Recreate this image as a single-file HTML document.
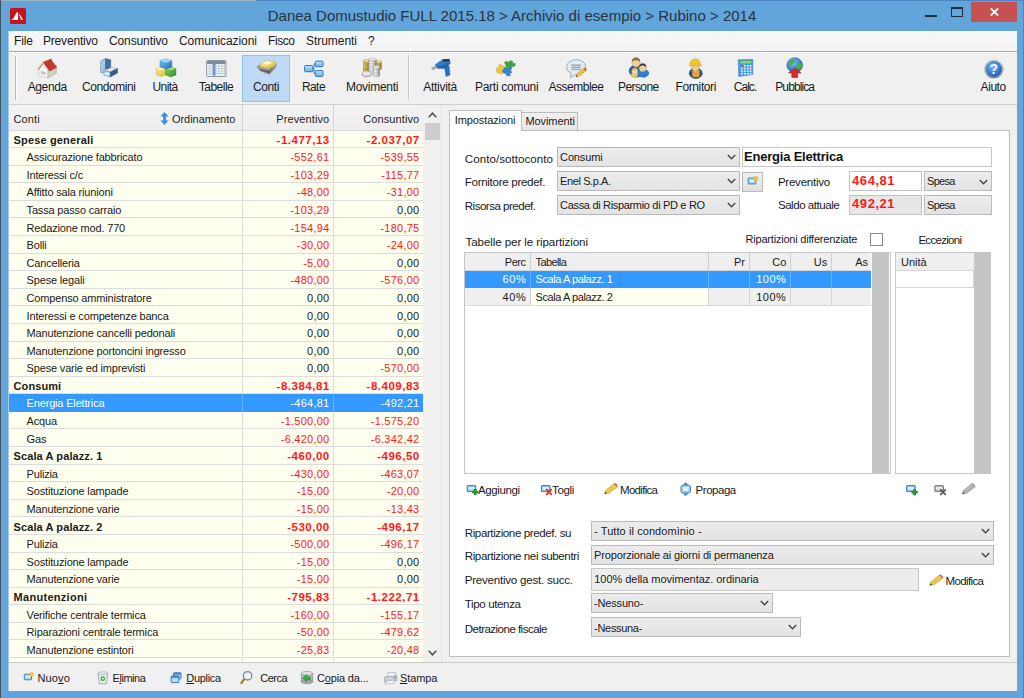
<!DOCTYPE html>
<html><head><meta charset="utf-8"><title>Danea Domustudio</title>
<style>
html,body{margin:0;padding:0}
body{width:1024px;height:698px;overflow:hidden;position:relative;background:#62a5da;font-family:"Liberation Sans",sans-serif;}
.t{position:absolute;white-space:nowrap;}
.r{position:absolute;box-sizing:border-box;}
svg{position:absolute;overflow:visible}
</style></head><body>

<div class="r" style="left:0.00px;top:0.00px;width:1.20px;height:698.00px;background:#44505c;"></div>
<div class="r" style="left:1023.00px;top:0.00px;width:1.00px;height:698.00px;background:#4f84b8;"></div>
<div class="r" style="left:1.00px;top:0.00px;width:255.00px;height:1.00px;background:#9db6cc;"></div>
<div class="r" style="left:256.00px;top:0.00px;width:768.00px;height:1.00px;background:#4a86c6;"></div>
<div class="r" style="left:9.60px;top:8.00px;width:16.00px;height:15.80px;background:#c5141c;border-radius:1.6px;"></div>
<svg style="left:0.00px;top:0.00px" width="32" height="32" viewBox="0 0 32 32"><path d="M11.1 19.9 L13.05 18.8 L17.0 12.0 L18.1 12.2 L18.1 19.9 Z" fill="#fff"/><path d="M19.0 14.3 L19.8 13.9 L23.1 19.9 L21.0 19.9 Z" fill="#fbe3e4"/></svg>
<div class="t" style="top:8.00px;font-size:15px;line-height:16px;color:#26343f;letter-spacing:0.000px;left:512.00px;transform:translateX(-50%);">Danea Domustudio FULL 2015.18 &gt; Archivio di esempio &gt; Rubino &gt; 2014</div>
<div class="r" style="left:925.00px;top:15.00px;width:11.50px;height:2.00px;background:#1f2e3d;"></div>
<div class="r" style="left:951.30px;top:7.30px;width:12.20px;height:9.50px;border:1px solid #1f2e3d;border-top-width:2.6px;"></div>
<div class="r" style="left:971.30px;top:1.50px;width:46.00px;height:20.50px;background:#c75050;"></div>
<svg style="left:989.50px;top:7.50px" width="9" height="8" viewBox="0 0 9 8"><path d="M0.8 0.4 L8.2 7.6 M8.2 0.4 L0.8 7.6" stroke="#fff" stroke-width="1.9" fill="none"/></svg>
<div class="r" style="left:8.00px;top:31.00px;width:1.00px;height:660.00px;background:#a9cbe8;"></div>
<div class="r" style="left:9.00px;top:31.30px;width:1008.00px;height:659.70px;background:#f0f0f0;"></div>
<div class="r" style="left:9.00px;top:31.30px;width:1008.00px;height:19.70px;background:linear-gradient(#f7f7f8,#f3f4f5);"></div>
<div class="r" style="left:9.00px;top:51.00px;width:1008.00px;height:1.00px;background:#a9a9a9;"></div>
<div class="r" style="left:9.00px;top:52.00px;width:1008.00px;height:1.00px;background:#ffffff;"></div>
<div class="t" style="top:33.30px;font-size:12px;line-height:16px;color:#1a1a1a;letter-spacing:-0.115px;left:14.00px;">File</div>
<div class="t" style="top:33.30px;font-size:12px;line-height:16px;color:#1a1a1a;letter-spacing:-0.189px;left:43.00px;">Preventivo</div>
<div class="t" style="top:33.30px;font-size:12px;line-height:16px;color:#1a1a1a;letter-spacing:-0.116px;left:109.00px;">Consuntivo</div>
<div class="t" style="top:33.30px;font-size:12px;line-height:16px;color:#1a1a1a;letter-spacing:-0.059px;left:179.00px;">Comunicazioni</div>
<div class="t" style="top:33.30px;font-size:12px;line-height:16px;color:#1a1a1a;letter-spacing:-0.418px;left:268.00px;">Fisco</div>
<div class="t" style="top:33.30px;font-size:12px;line-height:16px;color:#1a1a1a;letter-spacing:-0.045px;left:306.00px;">Strumenti</div>
<div class="t" style="top:33.30px;font-size:12px;line-height:16px;color:#1a1a1a;letter-spacing:-1.188px;left:368.00px;">?</div>
<div class="r" style="left:9.00px;top:104.00px;width:1008.00px;height:1.00px;background:#cfcfcf;"></div>
<div class="r" style="left:14.50px;top:56.00px;width:1.20px;height:44.00px;background:#b9b9b9;"></div>
<div class="r" style="left:15.70px;top:56.00px;width:1.00px;height:44.00px;background:#fdfdfd;"></div>
<div class="r" style="left:408.00px;top:55.00px;width:1.00px;height:45.00px;background:#c4c4c4;"></div>
<div class="r" style="left:409.00px;top:55.00px;width:1.00px;height:45.00px;background:#fbfbfb;"></div>
<div class="r" style="left:241.80px;top:54.50px;width:48.40px;height:47.60px;background:#bfdaf4;border:1px solid #93c2ef;"></div>
<div class="t" style="top:78.54px;font-size:12px;line-height:16px;color:#1a1a1a;letter-spacing:-0.405px;left:27.75px;">Agenda</div>
<div class="t" style="top:78.54px;font-size:12px;line-height:16px;color:#1a1a1a;letter-spacing:-0.422px;left:82.00px;">Condomini</div>
<div class="t" style="top:78.54px;font-size:12px;line-height:16px;color:#1a1a1a;letter-spacing:-0.604px;left:152.50px;">Unità</div>
<div class="t" style="top:78.54px;font-size:12px;line-height:16px;color:#1a1a1a;letter-spacing:-0.505px;left:198.75px;">Tabelle</div>
<div class="t" style="top:78.54px;font-size:12px;line-height:16px;color:#1a1a1a;letter-spacing:-0.429px;left:253.10px;">Conti</div>
<div class="t" style="top:78.54px;font-size:12px;line-height:16px;color:#1a1a1a;letter-spacing:-0.553px;left:301.90px;">Rate</div>
<div class="t" style="top:78.54px;font-size:12px;line-height:16px;color:#1a1a1a;letter-spacing:-0.273px;left:346.00px;">Movimenti</div>
<div class="t" style="top:78.54px;font-size:12px;line-height:16px;color:#1a1a1a;letter-spacing:-0.288px;left:423.25px;">Attività</div>
<div class="t" style="top:78.54px;font-size:12px;line-height:16px;color:#1a1a1a;letter-spacing:-0.282px;left:475.00px;">Parti comuni</div>
<div class="t" style="top:78.54px;font-size:12px;line-height:16px;color:#1a1a1a;letter-spacing:-0.472px;left:548.40px;">Assemblee</div>
<div class="t" style="top:78.54px;font-size:12px;line-height:16px;color:#1a1a1a;letter-spacing:-0.576px;left:618.00px;">Persone</div>
<div class="t" style="top:78.54px;font-size:12px;line-height:16px;color:#1a1a1a;letter-spacing:-0.389px;left:675.50px;">Fornitori</div>
<div class="t" style="top:78.54px;font-size:12px;line-height:16px;color:#1a1a1a;letter-spacing:-0.961px;left:733.75px;">Calc.</div>
<div class="t" style="top:78.54px;font-size:12px;line-height:16px;color:#1a1a1a;letter-spacing:-0.897px;left:775.25px;">Pubblica</div>
<div class="t" style="top:78.54px;font-size:12px;line-height:16px;color:#1a1a1a;letter-spacing:-0.440px;left:980.60px;">Aiuto</div>
<svg style="left:0;top:0;pointer-events:none" width="1024" height="698" viewBox="0 0 1024 698"><defs>
<linearGradient id="gb" x1="0" y1="0" x2="0" y2="1"><stop offset="0" stop-color="#bfe4fa"/><stop offset="1" stop-color="#5fb0e6"/></linearGradient>
<linearGradient id="gy" x1="0" y1="0" x2="1" y2="1"><stop offset="0" stop-color="#fbf1a0"/><stop offset="1" stop-color="#d9b92e"/></linearGradient>
<linearGradient id="gg" x1="0" y1="0" x2="1" y2="1"><stop offset="0" stop-color="#7fd35a"/><stop offset="1" stop-color="#2e8f24"/></linearGradient>
<linearGradient id="gbl" x1="0" y1="0" x2="1" y2="1"><stop offset="0" stop-color="#7cc3f2"/><stop offset="1" stop-color="#1f6fc0"/></linearGradient>
<radialGradient id="gh" cx="0.4" cy="0.35" r="0.7"><stop offset="0" stop-color="#7cc0f5"/><stop offset="1" stop-color="#1c62b5"/></radialGradient>
<radialGradient id="gl" cx="0.4" cy="0.35" r="0.7"><stop offset="0" stop-color="#6fc0ff"/><stop offset="1" stop-color="#1a58b0"/></radialGradient>
<linearGradient id="gdr" x1="0" y1="0" x2="0.6" y2="1"><stop offset="0" stop-color="#4f9fe6"/><stop offset="1" stop-color="#145aa8"/></linearGradient>
<linearGradient id="gs" x1="0" y1="0" x2="1" y2="0"><stop offset="0" stop-color="#cfcfcf"/><stop offset="0.4" stop-color="#f4f4f4"/><stop offset="1" stop-color="#8a8a8a"/></linearGradient>
<linearGradient id="go" x1="0" y1="0" x2="1" y2="0"><stop offset="0" stop-color="#e8d47a"/><stop offset="0.5" stop-color="#c9ab3c"/><stop offset="1" stop-color="#9c7f22"/></linearGradient>
</defs>
<polygon points="47.75,70.75 56.25,67.25 56.25,73.25 47.75,78.00" fill="#d8cfbf" stroke="#9b9384" stroke-width="0.5" stroke-linejoin="round" />
<polygon points="38.75,69.50 43.12,63.50 47.75,70.75 47.75,78.00 38.75,75.50" fill="#f7f7f5" stroke="#a8a8a4" stroke-width="0.5" stroke-linejoin="round" />
<polygon points="40.88,71.00 45.50,72.00 45.50,75.12 40.88,74.12" fill="#b9c4cf" stroke="none" stroke-width="0.6" stroke-linejoin="round" />
<polygon points="49.00,59.25 51.75,58.50 51.75,61.38 49.00,62.00" fill="#b59a6c" stroke="none" stroke-width="0.6" stroke-linejoin="round" />
<polygon points="43.12,62.00 50.75,59.50 56.75,67.25 49.62,71.00" fill="#c6382c" stroke="#9a2a22" stroke-width="0.5" stroke-linejoin="round" />
<polygon points="37.50,69.25 43.12,61.75 44.00,62.75 38.75,70.25" fill="#b9a57c" stroke="none" stroke-width="0.6" stroke-linejoin="round" />
<polygon points="100.50,61.00 105.50,58.50 105.50,73.00 100.50,72.62" fill="#8fb6dc" stroke="#5c7fa6" stroke-width="0.4" stroke-linejoin="round" />
<polygon points="105.50,58.50 110.75,59.75 110.75,70.75 105.50,73.00" fill="#3f6f9f" stroke="#35597f" stroke-width="0.4" stroke-linejoin="round" />
<polygon points="101.00,62.00 105.00,60.75 105.00,61.50 101.00,62.75" fill="#d6e8f7" stroke="none" stroke-width="0.6" stroke-linejoin="round" />
<polygon points="101.00,64.25 105.00,63.00 105.00,63.75 101.00,65.00" fill="#d6e8f7" stroke="none" stroke-width="0.6" stroke-linejoin="round" />
<polygon points="101.00,66.50 105.00,65.25 105.00,66.00 101.00,67.25" fill="#d6e8f7" stroke="none" stroke-width="0.6" stroke-linejoin="round" />
<polygon points="101.00,68.75 105.00,67.50 105.00,68.25 101.00,69.50" fill="#d6e8f7" stroke="none" stroke-width="0.6" stroke-linejoin="round" />
<polygon points="101.00,70.75 105.00,69.50 105.00,70.25 101.00,71.50" fill="#d6e8f7" stroke="none" stroke-width="0.6" stroke-linejoin="round" />
<polygon points="103.75,70.75 111.50,67.50 117.50,68.50 110.25,72.00" fill="#dfe7ee" stroke="#8fa0b2" stroke-width="0.4" stroke-linejoin="round" />
<polygon points="103.75,70.75 110.25,72.00 110.25,77.00 103.75,75.25" fill="#a9cdec" stroke="#5c83ab" stroke-width="0.4" stroke-linejoin="round" />
<polygon points="110.25,72.00 117.50,68.50 117.50,73.00 110.25,77.00" fill="#2f5f8c" stroke="#274a6d" stroke-width="0.4" stroke-linejoin="round" />
<polygon points="105.00,72.25 109.25,73.12 109.25,75.50 105.00,74.50" fill="#e4f1fb" stroke="none" stroke-width="0.6" stroke-linejoin="round" />
<polygon points="156.25,68.50 161.00,67.00 166.25,68.50 166.25,74.50 161.25,76.50 156.25,74.50" fill="url(#gy)" stroke="#b89a20" stroke-width="0.4" stroke-linejoin="round" />
<polygon points="156.25,68.50 161.00,67.00 166.25,68.50 161.25,70.25" fill="#fdf6b8" stroke="none" stroke-width="0.6" stroke-linejoin="round" />
<polygon points="165.62,68.50 171.00,67.00 176.00,68.50 176.00,75.00 170.75,77.00 165.62,75.00" fill="url(#gg)" stroke="#2c7a22" stroke-width="0.4" stroke-linejoin="round" />
<polygon points="165.62,68.50 171.00,67.00 176.00,68.50 170.75,70.25" fill="#9be27c" stroke="none" stroke-width="0.6" stroke-linejoin="round" />
<polygon points="160.00,60.75 166.00,59.00 171.88,60.75 171.88,67.00 166.00,69.00 160.00,67.00" fill="url(#gbl)" stroke="#1d5fa8" stroke-width="0.4" stroke-linejoin="round" />
<polygon points="160.00,60.75 166.00,59.00 171.88,60.75 166.00,62.75" fill="#a5d8fa" stroke="none" stroke-width="0.6" stroke-linejoin="round" />
<rect x="206.62" y="60.50" width="19.38" height="16.00" rx="1" fill="#f4f6f8" stroke="#8c98a4" stroke-width="1" />
<rect x="207.12" y="61.00" width="18.38" height="3.00" rx="0" fill="#7f8d9b" stroke="none" stroke-width="1" />
<rect x="212.50" y="64.00" width="3.00" height="11.50" rx="0" fill="#3f86d6" stroke="none" stroke-width="1" />
<rect x="209.50" y="64.00" width="0.70" height="11.50" rx="0" fill="#b5c0cb" stroke="none" stroke-width="1" />
<rect x="212.50" y="64.00" width="0.70" height="11.50" rx="0" fill="#b5c0cb" stroke="none" stroke-width="1" />
<rect x="215.50" y="64.00" width="0.70" height="11.50" rx="0" fill="#b5c0cb" stroke="none" stroke-width="1" />
<rect x="218.50" y="64.00" width="0.70" height="11.50" rx="0" fill="#b5c0cb" stroke="none" stroke-width="1" />
<rect x="221.50" y="64.00" width="0.70" height="11.50" rx="0" fill="#b5c0cb" stroke="none" stroke-width="1" />
<rect x="224.00" y="64.00" width="0.70" height="11.50" rx="0" fill="#b5c0cb" stroke="none" stroke-width="1" />
<rect x="207.62" y="65.75" width="17.38" height="0.70" rx="0" fill="#b5c0cb" stroke="none" stroke-width="1" />
<rect x="207.62" y="68.25" width="17.38" height="0.70" rx="0" fill="#b5c0cb" stroke="none" stroke-width="1" />
<rect x="207.62" y="70.75" width="17.38" height="0.70" rx="0" fill="#b5c0cb" stroke="none" stroke-width="1" />
<rect x="207.62" y="73.25" width="17.38" height="0.70" rx="0" fill="#b5c0cb" stroke="none" stroke-width="1" />
<polygon points="256.88,67.00 261.25,63.88 276.50,63.88 275.00,68.25 269.38,74.25 260.00,70.75" fill="#9a9a9a" stroke="#6e6e6e" stroke-width="0.4" stroke-linejoin="round" />
<polygon points="258.75,68.88 269.38,70.75 273.75,67.00 269.38,73.50 260.62,70.50" fill="#5e5e5e" stroke="none" stroke-width="0.6" stroke-linejoin="round" />
<polygon points="260.62,63.50 266.88,60.50 275.62,62.00 275.00,66.00 268.12,68.50 260.00,66.75" fill="url(#gy)" stroke="#c5a82e" stroke-width="0.4" stroke-linejoin="round" />
<polygon points="261.88,63.50 266.88,61.25 272.75,62.25 267.75,64.75" fill="#fffbd0" stroke="none" stroke-width="0.6" stroke-linejoin="round" />
<path d="M313.12 68.50 L314.00 68.50 M314.00 63.88 L314.00 73.50 M314.00 63.88 L315.00 63.88 M314.00 73.50 L315.00 73.50" stroke="#2f78b8" stroke-width="0.9" fill="none"/>
<rect x="304.50" y="65.50" width="8.25" height="6.25" rx="1" fill="url(#gb)" stroke="#2f78b8" stroke-width="1" />
<rect x="315.25" y="61.12" width="7.75" height="5.62" rx="1" fill="url(#gb)" stroke="#2f78b8" stroke-width="1" />
<rect x="315.25" y="70.50" width="7.75" height="5.88" rx="1" fill="url(#gb)" stroke="#2f78b8" stroke-width="1" />
<rect x="363.25" y="61.00" width="6.25" height="9.50" rx="0" fill="url(#go)" stroke="#8c7420" stroke-width="0.4" /><ellipse cx="366.38" cy="70.50" rx="3.12" ry="1.30" fill="url(#go)" stroke="#8c7420" stroke-width="0.4" /><rect x="363.25" y="62.75" width="6.25" height="0.50" rx="0" fill="#6a6a4a" stroke="none" stroke-width="0" opacity="0.45"/><rect x="363.25" y="64.50" width="6.25" height="0.50" rx="0" fill="#6a6a4a" stroke="none" stroke-width="0" opacity="0.45"/><rect x="363.25" y="66.25" width="6.25" height="0.50" rx="0" fill="#6a6a4a" stroke="none" stroke-width="0" opacity="0.45"/><rect x="363.25" y="68.00" width="6.25" height="0.50" rx="0" fill="#6a6a4a" stroke="none" stroke-width="0" opacity="0.45"/><ellipse cx="366.38" cy="61.00" rx="3.12" ry="1.30" fill="#efe3a0" stroke="#8c7420" stroke-width="0.4" />
<rect x="376.00" y="62.00" width="5.50" height="6.50" rx="0" fill="url(#go)" stroke="#8c7420" stroke-width="0.4" /><ellipse cx="378.75" cy="68.50" rx="2.75" ry="1.30" fill="url(#go)" stroke="#8c7420" stroke-width="0.4" /><rect x="376.00" y="63.75" width="5.50" height="0.50" rx="0" fill="#6a6a4a" stroke="none" stroke-width="0" opacity="0.45"/><rect x="376.00" y="65.50" width="5.50" height="0.50" rx="0" fill="#6a6a4a" stroke="none" stroke-width="0" opacity="0.45"/><ellipse cx="378.75" cy="62.00" rx="2.75" ry="1.30" fill="#efe3a0" stroke="#8c7420" stroke-width="0.4" />
<rect x="368.75" y="59.50" width="7.50" height="13.75" rx="0" fill="url(#gs)" stroke="#8e8e8e" stroke-width="0.4" /><ellipse cx="372.50" cy="73.25" rx="3.75" ry="1.30" fill="url(#gs)" stroke="#8e8e8e" stroke-width="0.4" /><rect x="368.75" y="61.25" width="7.50" height="0.50" rx="0" fill="#777" stroke="none" stroke-width="0" opacity="0.45"/><rect x="368.75" y="63.00" width="7.50" height="0.50" rx="0" fill="#777" stroke="none" stroke-width="0" opacity="0.45"/><rect x="368.75" y="64.75" width="7.50" height="0.50" rx="0" fill="#777" stroke="none" stroke-width="0" opacity="0.45"/><rect x="368.75" y="66.50" width="7.50" height="0.50" rx="0" fill="#777" stroke="none" stroke-width="0" opacity="0.45"/><rect x="368.75" y="68.25" width="7.50" height="0.50" rx="0" fill="#777" stroke="none" stroke-width="0" opacity="0.45"/><rect x="368.75" y="70.00" width="7.50" height="0.50" rx="0" fill="#777" stroke="none" stroke-width="0" opacity="0.45"/><ellipse cx="372.50" cy="59.50" rx="3.75" ry="1.30" fill="#ececec" stroke="#8e8e8e" stroke-width="0.4" />
<rect x="373.00" y="67.00" width="6.75" height="8.50" rx="0" fill="url(#gs)" stroke="#8e8e8e" stroke-width="0.4" /><ellipse cx="376.38" cy="75.50" rx="3.38" ry="1.30" fill="url(#gs)" stroke="#8e8e8e" stroke-width="0.4" /><rect x="373.00" y="68.75" width="6.75" height="0.50" rx="0" fill="#777" stroke="none" stroke-width="0" opacity="0.45"/><rect x="373.00" y="70.50" width="6.75" height="0.50" rx="0" fill="#777" stroke="none" stroke-width="0" opacity="0.45"/><rect x="373.00" y="72.25" width="6.75" height="0.50" rx="0" fill="#777" stroke="none" stroke-width="0" opacity="0.45"/><ellipse cx="376.38" cy="67.00" rx="3.38" ry="1.30" fill="#ececec" stroke="#8e8e8e" stroke-width="0.4" />
<ellipse cx="366.62" cy="74.25" rx="4.60" ry="2.60" fill="#c9c9c9" stroke="#8e8e8e" stroke-width="0.5" />
<ellipse cx="366.62" cy="73.50" rx="4.60" ry="2.60" fill="#e6e6e6" stroke="#8a8a8a" stroke-width="0.5" />
<polygon points="431.25,68.50 436.00,65.50 437.50,67.50 432.88,69.75" fill="#a8aeb4" stroke="#70767c" stroke-width="0.4" stroke-linejoin="round" />
<polygon points="435.38,64.50 442.25,59.75 449.12,59.50 450.38,63.00 446.00,68.25 437.88,68.50" fill="url(#gdr)" stroke="#174f90" stroke-width="0.4" stroke-linejoin="round" />
<polygon points="442.25,59.50 449.12,59.00 450.00,61.00 443.50,61.75" fill="#1d2f45" stroke="none" stroke-width="0.6" stroke-linejoin="round" />
<polygon points="444.50,67.00 449.12,66.00 450.00,75.12 446.00,76.50" fill="#1f72c8" stroke="#174f90" stroke-width="0.4" stroke-linejoin="round" />
<polygon points="496.75,68.00 499.62,66.75 499.00,65.00 501.25,64.50 502.12,66.50 504.62,65.75 504.25,69.50 502.50,70.75 503.75,72.00 500.88,74.50 499.62,72.62 497.50,73.50 496.50,70.75" fill="#e7c73a" stroke="#b8981c" stroke-width="0.4" stroke-linejoin="round" />
<polygon points="504.25,62.50 507.12,61.00 508.00,62.50 510.50,60.50 513.00,61.75 512.12,63.50 515.25,63.50 515.00,66.00 512.12,66.75 511.25,68.25 508.38,66.75 506.50,68.00 505.88,65.12" fill="#3fa53a" stroke="#247a22" stroke-width="0.4" stroke-linejoin="round" />
<polygon points="502.50,70.75 505.00,67.25 507.12,68.25 509.25,67.00 511.50,68.50 510.50,70.75 512.12,72.25 509.62,73.50 510.50,75.50 507.12,76.00 505.88,73.50 503.75,73.25" fill="#2f86d8" stroke="#1a5ea6" stroke-width="0.4" stroke-linejoin="round" />
<path d="M566.75 67.62 C566.75 62.00 571.50 59.75 576.25 59.75 C582.12 59.75 585.88 63.25 585.88 67.62 C585.88 72.00 581.50 74.75 575.88 74.50 L570.25 77.62 L571.25 73.50 C568.38 72.00 566.75 70.12 566.75 67.62 Z" fill="#e3ebf2" stroke="#8ea3b6" stroke-width="0.9"/>
<rect x="571.25" y="64.50" width="9.50" height="1.10" rx="0" fill="#8b99a6" stroke="none" stroke-width="1" />
<rect x="571.25" y="66.62" width="9.50" height="1.10" rx="0" fill="#8b99a6" stroke="none" stroke-width="1" />
<rect x="571.25" y="68.75" width="9.50" height="1.10" rx="0" fill="#8b99a6" stroke="none" stroke-width="1" />
<polygon points="575.88,77.00 577.12,73.50 584.00,68.00 586.25,70.50 579.25,76.00" fill="#e8c53a" stroke="#a88b1c" stroke-width="0.4" stroke-linejoin="round" />
<polygon points="583.38,68.50 584.62,67.50 586.75,69.75 585.75,71.00" fill="#d8483c" stroke="none" stroke-width="0.6" stroke-linejoin="round" />
<polygon points="575.88,77.00 576.50,75.00 577.75,76.25" fill="#444" stroke="none" stroke-width="0.6" stroke-linejoin="round" />
<ellipse cx="636.38" cy="71.00" rx="7.20" ry="6.20" fill="#2a5f9e" stroke="#1c4577" stroke-width="0.4" />
<ellipse cx="636.00" cy="62.25" rx="4.10" ry="5.00" fill="#f0cf9a" stroke="#b08a50" stroke-width="0.4" />
<path d="M631.75 62.00 C631.75 56.38 640.50 56.38 640.25 62.00 C638.25 59.75 633.88 59.75 631.75 62.00Z" fill="#8a6a3a"/>
<ellipse cx="643.25" cy="73.25" rx="5.60" ry="4.00" fill="#2f7fd0" stroke="#1c4f90" stroke-width="0.4" />
<ellipse cx="642.62" cy="67.62" rx="3.60" ry="4.20" fill="#f0cf9a" stroke="#b08a50" stroke-width="0.4" />
<path d="M639.00 67.25 C639.00 62.25 646.75 62.25 646.50 67.50 C644.50 65.00 641.00 65.00 639.00 67.25Z" fill="#2c3440"/>
<ellipse cx="634.50" cy="74.75" rx="3.40" ry="2.60" fill="#e8d070" stroke="#a89030" stroke-width="0.4" />
<ellipse cx="634.75" cy="71.38" rx="3.00" ry="3.30" fill="#f3d9a8" stroke="#b08a50" stroke-width="0.4" />
<path d="M631.75 71.00 C632.00 67.25 637.62 67.25 637.75 71.00 C636.00 69.25 633.50 69.25 631.75 71.00Z" fill="#d8b45a"/>
<ellipse cx="695.75" cy="73.25" rx="6.60" ry="5.20" fill="#27528a" stroke="#1a3a66" stroke-width="0.4" />
<polygon points="692.00,70.75 694.75,69.50 696.75,69.50 699.75,70.75 699.25,77.00 692.62,77.00" fill="#e0a832" stroke="none" stroke-width="0.6" stroke-linejoin="round" />
<polygon points="693.88,69.50 695.75,72.00 697.62,69.50" fill="#eef2f6" stroke="none" stroke-width="0.6" stroke-linejoin="round" />
<ellipse cx="695.50" cy="66.75" rx="3.90" ry="4.30" fill="#eec890" stroke="#a8804a" stroke-width="0.4" />
<path d="M689.75 65.00 C689.75 57.00 700.75 57.00 700.50 64.50 L702.00 65.25 L689.25 65.75Z" fill="#f0c828" stroke="#b08c10" stroke-width="0.4"/>
<polygon points="738.25,59.75 752.75,59.50 752.75,74.50 738.75,76.50" fill="#4c9ce8" stroke="#2c6ab8" stroke-width="0.5" stroke-linejoin="round" />
<polygon points="740.25,61.00 751.25,60.75 751.25,63.50 740.25,63.75" fill="#8fdc6a" stroke="#3f8f3a" stroke-width="0.3" stroke-linejoin="round" />
<rect x="741.00" y="65.00" width="1.70" height="1.60" rx="0" fill="#e04040" stroke="none" stroke-width="1" />
<rect x="744.00" y="65.00" width="1.70" height="1.60" rx="0" fill="#e8f2fc" stroke="none" stroke-width="1" />
<rect x="747.00" y="65.00" width="1.70" height="1.60" rx="0" fill="#e8f2fc" stroke="none" stroke-width="1" />
<rect x="749.75" y="65.00" width="1.70" height="1.60" rx="0" fill="#e8f2fc" stroke="none" stroke-width="1" />
<rect x="741.00" y="67.75" width="1.70" height="1.60" rx="0" fill="#e8f2fc" stroke="none" stroke-width="1" />
<rect x="744.00" y="67.75" width="1.70" height="1.60" rx="0" fill="#e8f2fc" stroke="none" stroke-width="1" />
<rect x="747.00" y="67.75" width="1.70" height="1.60" rx="0" fill="#e8f2fc" stroke="none" stroke-width="1" />
<rect x="749.75" y="67.75" width="1.70" height="1.60" rx="0" fill="#e8f2fc" stroke="none" stroke-width="1" />
<rect x="741.00" y="70.50" width="1.70" height="1.60" rx="0" fill="#e8f2fc" stroke="none" stroke-width="1" />
<rect x="744.00" y="70.50" width="1.70" height="1.60" rx="0" fill="#e8f2fc" stroke="none" stroke-width="1" />
<rect x="747.00" y="70.50" width="1.70" height="1.60" rx="0" fill="#e8f2fc" stroke="none" stroke-width="1" />
<rect x="749.75" y="70.50" width="1.70" height="1.60" rx="0" fill="#e8f2fc" stroke="none" stroke-width="1" />
<rect x="741.00" y="73.00" width="1.70" height="1.60" rx="0" fill="#e8f2fc" stroke="none" stroke-width="1" />
<rect x="744.00" y="73.00" width="1.70" height="1.60" rx="0" fill="#e8f2fc" stroke="none" stroke-width="1" />
<rect x="747.00" y="73.00" width="1.70" height="1.60" rx="0" fill="#e8f2fc" stroke="none" stroke-width="1" />
<rect x="749.75" y="73.00" width="1.70" height="1.60" rx="0" fill="#e8f2fc" stroke="none" stroke-width="1" />
<ellipse cx="794.75" cy="65.12" rx="7.90" ry="7.40" fill="url(#gh)" stroke="#1a4f8c" stroke-width="0.5" />
<polygon points="788.50,63.00 791.88,59.75 795.00,60.75 793.75,63.50 791.25,64.50 790.00,67.00" fill="#4cae3c" stroke="none" stroke-width="0.6" stroke-linejoin="round" />
<polygon points="796.50,64.50 800.00,62.00 802.25,64.50 801.25,68.50 798.12,69.50" fill="#4cae3c" stroke="none" stroke-width="0.6" stroke-linejoin="round" />
<polygon points="792.50,67.00 795.00,66.00 795.62,68.88" fill="#4cae3c" stroke="none" stroke-width="0.6" stroke-linejoin="round" />
<polygon points="794.75,68.00 801.25,73.00 797.75,73.00 797.75,77.50 791.75,77.50 791.75,73.00 788.50,73.00" fill="#d82830" stroke="#9a1820" stroke-width="0.5" stroke-linejoin="round" />
<defs><linearGradient id="gring" x1="0" y1="0" x2="0" y2="1"><stop offset="0" stop-color="#d4d8dc"/><stop offset="1" stop-color="#7c8690"/></linearGradient></defs>
<ellipse cx="993.90" cy="68.85" rx="9.70" ry="9.70" fill="url(#gring)" stroke="none" stroke-width="1" />
<ellipse cx="993.90" cy="68.85" rx="7.60" ry="7.60" fill="url(#gl)" stroke="#1d5fae" stroke-width="0.4" />
<text x="993.9" y="73.85" text-anchor="middle" font-family="Liberation Sans" font-weight="700" font-size="14" fill="#f4f8fc">?</text></svg>
<div class="r" style="left:9.00px;top:105.00px;width:414.00px;height:25.50px;background:linear-gradient(#f3f3f3,#eeeeee);"></div>
<div class="r" style="left:242.00px;top:105.00px;width:1.00px;height:25.50px;background:#d5d5d5;"></div>
<div class="r" style="left:333.00px;top:105.00px;width:1.00px;height:25.50px;background:#d5d5d5;"></div>
<div class="t" style="top:110.89px;font-size:11px;line-height:16px;color:#1e1e1e;letter-spacing:0.100px;left:13.50px;">Conti</div>
<div class="t" style="top:110.89px;font-size:11px;line-height:16px;color:#1e1e1e;letter-spacing:-0.019px;left:171.90px;">Ordinamento</div>
<div class="t" style="top:110.89px;font-size:11px;line-height:16px;color:#1e1e1e;letter-spacing:0.100px;right:694.70px;">Preventivo</div>
<div class="t" style="top:110.89px;font-size:11px;line-height:16px;color:#1e1e1e;letter-spacing:0.100px;right:604.70px;">Consuntivo</div>
<svg style="left:159.60px;top:112.40px" width="9" height="13" viewBox="0 0 9 13"><path d="M4.5 0 L8.6 4.6 L5.9 4.6 L5.9 8.4 L8.6 8.4 L4.5 13 L0.4 8.4 L3.1 8.4 L3.1 4.6 L0.4 4.6 Z" fill="#3b8ee0"/></svg>
<div class="r" style="left:9.00px;top:130.50px;width:414.00px;height:531.80px;background:#fffff0;"></div>
<div class="r" style="left:9.00px;top:130.00px;width:414.00px;height:1.00px;background:#d9d9d9;"></div>
<div class="t" style="top:131.69px;font-size:11px;line-height:16px;color:#1a1a1a;letter-spacing:0.150px;font-weight:700;left:13.60px;">Spese generali</div>
<div class="t" style="top:131.69px;font-size:11.5px;line-height:16px;color:#ff1818;letter-spacing:0.500px;font-weight:700;right:694.30px;">-1.477,13</div>
<div class="t" style="top:131.69px;font-size:11.5px;line-height:16px;color:#ff1818;letter-spacing:0.500px;font-weight:700;right:604.30px;">-2.037,07</div>
<div class="r" style="left:9.00px;top:147.09px;width:414.00px;height:1.00px;background:#dcdcdc;"></div>
<div class="t" style="top:149.28px;font-size:11px;line-height:16px;color:#1a1a1a;letter-spacing:-0.170px;left:26.60px;">Assicurazione fabbricato</div>
<div class="t" style="top:149.28px;font-size:11px;line-height:16px;color:#ff1818;letter-spacing:0.250px;right:694.55px;">-552,61</div>
<div class="t" style="top:149.28px;font-size:11px;line-height:16px;color:#ff1818;letter-spacing:0.250px;right:604.55px;">-539,55</div>
<div class="r" style="left:9.00px;top:164.67px;width:414.00px;height:1.00px;background:#dcdcdc;"></div>
<div class="t" style="top:166.87px;font-size:11px;line-height:16px;color:#1a1a1a;letter-spacing:-0.170px;left:26.60px;">Interessi c/c</div>
<div class="t" style="top:166.87px;font-size:11px;line-height:16px;color:#ff1818;letter-spacing:0.250px;right:694.55px;">-103,29</div>
<div class="t" style="top:166.87px;font-size:11px;line-height:16px;color:#ff1818;letter-spacing:0.250px;right:604.55px;">-115,77</div>
<div class="r" style="left:9.00px;top:182.26px;width:414.00px;height:1.00px;background:#dcdcdc;"></div>
<div class="t" style="top:184.45px;font-size:11px;line-height:16px;color:#1a1a1a;letter-spacing:-0.170px;left:26.60px;">Affitto sala riunioni</div>
<div class="t" style="top:184.45px;font-size:11px;line-height:16px;color:#ff1818;letter-spacing:0.250px;right:694.55px;">-48,00</div>
<div class="t" style="top:184.45px;font-size:11px;line-height:16px;color:#ff1818;letter-spacing:0.250px;right:604.55px;">-31,00</div>
<div class="r" style="left:9.00px;top:199.84px;width:414.00px;height:1.00px;background:#dcdcdc;"></div>
<div class="t" style="top:202.04px;font-size:11px;line-height:16px;color:#1a1a1a;letter-spacing:-0.170px;left:26.60px;">Tassa passo carraio</div>
<div class="t" style="top:202.04px;font-size:11px;line-height:16px;color:#ff1818;letter-spacing:0.250px;right:694.55px;">-103,29</div>
<div class="t" style="top:202.04px;font-size:11px;line-height:16px;color:#1a1a1a;letter-spacing:0.250px;right:604.55px;">0,00</div>
<div class="r" style="left:9.00px;top:217.43px;width:414.00px;height:1.00px;background:#dcdcdc;"></div>
<div class="t" style="top:219.62px;font-size:11px;line-height:16px;color:#1a1a1a;letter-spacing:-0.170px;left:26.60px;">Redazione mod. 770</div>
<div class="t" style="top:219.62px;font-size:11px;line-height:16px;color:#ff1818;letter-spacing:0.250px;right:694.55px;">-154,94</div>
<div class="t" style="top:219.62px;font-size:11px;line-height:16px;color:#ff1818;letter-spacing:0.250px;right:604.55px;">-180,75</div>
<div class="r" style="left:9.00px;top:235.02px;width:414.00px;height:1.00px;background:#dcdcdc;"></div>
<div class="t" style="top:237.21px;font-size:11px;line-height:16px;color:#1a1a1a;letter-spacing:-0.170px;left:26.60px;">Bolli</div>
<div class="t" style="top:237.21px;font-size:11px;line-height:16px;color:#ff1818;letter-spacing:0.250px;right:694.55px;">-30,00</div>
<div class="t" style="top:237.21px;font-size:11px;line-height:16px;color:#ff1818;letter-spacing:0.250px;right:604.55px;">-24,00</div>
<div class="r" style="left:9.00px;top:252.60px;width:414.00px;height:1.00px;background:#dcdcdc;"></div>
<div class="t" style="top:254.79px;font-size:11px;line-height:16px;color:#1a1a1a;letter-spacing:-0.170px;left:26.60px;">Cancelleria</div>
<div class="t" style="top:254.79px;font-size:11px;line-height:16px;color:#ff1818;letter-spacing:0.250px;right:694.55px;">-5,00</div>
<div class="t" style="top:254.79px;font-size:11px;line-height:16px;color:#1a1a1a;letter-spacing:0.250px;right:604.55px;">0,00</div>
<div class="r" style="left:9.00px;top:270.19px;width:414.00px;height:1.00px;background:#dcdcdc;"></div>
<div class="t" style="top:272.38px;font-size:11px;line-height:16px;color:#1a1a1a;letter-spacing:-0.170px;left:26.60px;">Spese legali</div>
<div class="t" style="top:272.38px;font-size:11px;line-height:16px;color:#ff1818;letter-spacing:0.250px;right:694.55px;">-480,00</div>
<div class="t" style="top:272.38px;font-size:11px;line-height:16px;color:#ff1818;letter-spacing:0.250px;right:604.55px;">-576,00</div>
<div class="r" style="left:9.00px;top:287.77px;width:414.00px;height:1.00px;background:#dcdcdc;"></div>
<div class="t" style="top:289.97px;font-size:11px;line-height:16px;color:#1a1a1a;letter-spacing:-0.170px;left:26.60px;">Compenso amministratore</div>
<div class="t" style="top:289.97px;font-size:11px;line-height:16px;color:#1a1a1a;letter-spacing:0.250px;right:694.55px;">0,00</div>
<div class="t" style="top:289.97px;font-size:11px;line-height:16px;color:#1a1a1a;letter-spacing:0.250px;right:604.55px;">0,00</div>
<div class="r" style="left:9.00px;top:305.36px;width:414.00px;height:1.00px;background:#dcdcdc;"></div>
<div class="t" style="top:307.55px;font-size:11px;line-height:16px;color:#1a1a1a;letter-spacing:-0.170px;left:26.60px;">Interessi e competenze banca</div>
<div class="t" style="top:307.55px;font-size:11px;line-height:16px;color:#1a1a1a;letter-spacing:0.250px;right:694.55px;">0,00</div>
<div class="t" style="top:307.55px;font-size:11px;line-height:16px;color:#1a1a1a;letter-spacing:0.250px;right:604.55px;">0,00</div>
<div class="r" style="left:9.00px;top:322.95px;width:414.00px;height:1.00px;background:#dcdcdc;"></div>
<div class="t" style="top:325.14px;font-size:11px;line-height:16px;color:#1a1a1a;letter-spacing:-0.170px;left:26.60px;">Manutenzione cancelli pedonali</div>
<div class="t" style="top:325.14px;font-size:11px;line-height:16px;color:#1a1a1a;letter-spacing:0.250px;right:694.55px;">0,00</div>
<div class="t" style="top:325.14px;font-size:11px;line-height:16px;color:#1a1a1a;letter-spacing:0.250px;right:604.55px;">0,00</div>
<div class="r" style="left:9.00px;top:340.53px;width:414.00px;height:1.00px;background:#dcdcdc;"></div>
<div class="t" style="top:342.72px;font-size:11px;line-height:16px;color:#1a1a1a;letter-spacing:-0.170px;left:26.60px;">Manutenzione portoncini ingresso</div>
<div class="t" style="top:342.72px;font-size:11px;line-height:16px;color:#1a1a1a;letter-spacing:0.250px;right:694.55px;">0,00</div>
<div class="t" style="top:342.72px;font-size:11px;line-height:16px;color:#1a1a1a;letter-spacing:0.250px;right:604.55px;">0,00</div>
<div class="r" style="left:9.00px;top:358.12px;width:414.00px;height:1.00px;background:#dcdcdc;"></div>
<div class="t" style="top:360.31px;font-size:11px;line-height:16px;color:#1a1a1a;letter-spacing:-0.170px;left:26.60px;">Spese varie ed imprevisti</div>
<div class="t" style="top:360.31px;font-size:11px;line-height:16px;color:#1a1a1a;letter-spacing:0.250px;right:694.55px;">0,00</div>
<div class="t" style="top:360.31px;font-size:11px;line-height:16px;color:#ff1818;letter-spacing:0.250px;right:604.55px;">-570,00</div>
<div class="r" style="left:9.00px;top:375.70px;width:414.00px;height:1.00px;background:#dcdcdc;"></div>
<div class="t" style="top:377.90px;font-size:11px;line-height:16px;color:#1a1a1a;letter-spacing:0.073px;font-weight:700;left:13.60px;">Consumi</div>
<div class="t" style="top:377.90px;font-size:11.5px;line-height:16px;color:#ff1818;letter-spacing:0.500px;font-weight:700;right:694.30px;">-8.384,81</div>
<div class="t" style="top:377.90px;font-size:11.5px;line-height:16px;color:#ff1818;letter-spacing:0.500px;font-weight:700;right:604.30px;">-8.409,83</div>
<div class="r" style="left:9.00px;top:393.29px;width:414.00px;height:1.00px;background:#dcdcdc;"></div>
<div class="r" style="left:9.00px;top:394.29px;width:414.00px;height:17.59px;background:#3399ff;"></div>
<div class="t" style="top:395.48px;font-size:11px;line-height:16px;color:#ffffff;letter-spacing:-0.170px;left:26.60px;">Energia Elettrica</div>
<div class="t" style="top:395.48px;font-size:11px;line-height:16px;color:#ffffff;letter-spacing:0.250px;right:694.55px;">-464,81</div>
<div class="t" style="top:395.48px;font-size:11px;line-height:16px;color:#ffffff;letter-spacing:0.250px;right:604.55px;">-492,21</div>
<div class="t" style="top:413.07px;font-size:11px;line-height:16px;color:#1a1a1a;letter-spacing:-0.170px;left:26.60px;">Acqua</div>
<div class="t" style="top:413.07px;font-size:11px;line-height:16px;color:#ff1818;letter-spacing:0.250px;right:694.55px;">-1.500,00</div>
<div class="t" style="top:413.07px;font-size:11px;line-height:16px;color:#ff1818;letter-spacing:0.250px;right:604.55px;">-1.575,20</div>
<div class="r" style="left:9.00px;top:428.46px;width:414.00px;height:1.00px;background:#dcdcdc;"></div>
<div class="t" style="top:430.65px;font-size:11px;line-height:16px;color:#1a1a1a;letter-spacing:-0.170px;left:26.60px;">Gas</div>
<div class="t" style="top:430.65px;font-size:11px;line-height:16px;color:#ff1818;letter-spacing:0.250px;right:694.55px;">-6.420,00</div>
<div class="t" style="top:430.65px;font-size:11px;line-height:16px;color:#ff1818;letter-spacing:0.250px;right:604.55px;">-6.342,42</div>
<div class="r" style="left:9.00px;top:446.05px;width:414.00px;height:1.00px;background:#dcdcdc;"></div>
<div class="t" style="top:448.24px;font-size:11px;line-height:16px;color:#1a1a1a;letter-spacing:0.098px;font-weight:700;left:13.60px;">Scala A palazz. 1</div>
<div class="t" style="top:448.24px;font-size:11.5px;line-height:16px;color:#ff1818;letter-spacing:0.500px;font-weight:700;right:694.30px;">-460,00</div>
<div class="t" style="top:448.24px;font-size:11.5px;line-height:16px;color:#ff1818;letter-spacing:0.500px;font-weight:700;right:604.30px;">-496,50</div>
<div class="r" style="left:9.00px;top:463.63px;width:414.00px;height:1.00px;background:#dcdcdc;"></div>
<div class="t" style="top:465.83px;font-size:11px;line-height:16px;color:#1a1a1a;letter-spacing:-0.170px;left:26.60px;">Pulizia</div>
<div class="t" style="top:465.83px;font-size:11px;line-height:16px;color:#ff1818;letter-spacing:0.250px;right:694.55px;">-430,00</div>
<div class="t" style="top:465.83px;font-size:11px;line-height:16px;color:#ff1818;letter-spacing:0.250px;right:604.55px;">-463,07</div>
<div class="r" style="left:9.00px;top:481.22px;width:414.00px;height:1.00px;background:#dcdcdc;"></div>
<div class="t" style="top:483.41px;font-size:11px;line-height:16px;color:#1a1a1a;letter-spacing:-0.170px;left:26.60px;">Sostituzione lampade</div>
<div class="t" style="top:483.41px;font-size:11px;line-height:16px;color:#ff1818;letter-spacing:0.250px;right:694.55px;">-15,00</div>
<div class="t" style="top:483.41px;font-size:11px;line-height:16px;color:#ff1818;letter-spacing:0.250px;right:604.55px;">-20,00</div>
<div class="r" style="left:9.00px;top:498.81px;width:414.00px;height:1.00px;background:#dcdcdc;"></div>
<div class="t" style="top:501.00px;font-size:11px;line-height:16px;color:#1a1a1a;letter-spacing:-0.170px;left:26.60px;">Manutenzione varie</div>
<div class="t" style="top:501.00px;font-size:11px;line-height:16px;color:#ff1818;letter-spacing:0.250px;right:694.55px;">-15,00</div>
<div class="t" style="top:501.00px;font-size:11px;line-height:16px;color:#ff1818;letter-spacing:0.250px;right:604.55px;">-13,43</div>
<div class="r" style="left:9.00px;top:516.39px;width:414.00px;height:1.00px;background:#dcdcdc;"></div>
<div class="t" style="top:518.58px;font-size:11px;line-height:16px;color:#1a1a1a;letter-spacing:0.098px;font-weight:700;left:13.60px;">Scala A palazz. 2</div>
<div class="t" style="top:518.58px;font-size:11.5px;line-height:16px;color:#ff1818;letter-spacing:0.500px;font-weight:700;right:694.30px;">-530,00</div>
<div class="t" style="top:518.58px;font-size:11.5px;line-height:16px;color:#ff1818;letter-spacing:0.500px;font-weight:700;right:604.30px;">-496,17</div>
<div class="r" style="left:9.00px;top:533.98px;width:414.00px;height:1.00px;background:#dcdcdc;"></div>
<div class="t" style="top:536.17px;font-size:11px;line-height:16px;color:#1a1a1a;letter-spacing:-0.170px;left:26.60px;">Pulizia</div>
<div class="t" style="top:536.17px;font-size:11px;line-height:16px;color:#ff1818;letter-spacing:0.250px;right:694.55px;">-500,00</div>
<div class="t" style="top:536.17px;font-size:11px;line-height:16px;color:#ff1818;letter-spacing:0.250px;right:604.55px;">-496,17</div>
<div class="r" style="left:9.00px;top:551.56px;width:414.00px;height:1.00px;background:#dcdcdc;"></div>
<div class="t" style="top:553.76px;font-size:11px;line-height:16px;color:#1a1a1a;letter-spacing:-0.170px;left:26.60px;">Sostituzione lampade</div>
<div class="t" style="top:553.76px;font-size:11px;line-height:16px;color:#ff1818;letter-spacing:0.250px;right:694.55px;">-15,00</div>
<div class="t" style="top:553.76px;font-size:11px;line-height:16px;color:#1a1a1a;letter-spacing:0.250px;right:604.55px;">0,00</div>
<div class="r" style="left:9.00px;top:569.15px;width:414.00px;height:1.00px;background:#dcdcdc;"></div>
<div class="t" style="top:571.34px;font-size:11px;line-height:16px;color:#1a1a1a;letter-spacing:-0.170px;left:26.60px;">Manutenzione varie</div>
<div class="t" style="top:571.34px;font-size:11px;line-height:16px;color:#ff1818;letter-spacing:0.250px;right:694.55px;">-15,00</div>
<div class="t" style="top:571.34px;font-size:11px;line-height:16px;color:#1a1a1a;letter-spacing:0.250px;right:604.55px;">0,00</div>
<div class="r" style="left:9.00px;top:586.74px;width:414.00px;height:1.00px;background:#dcdcdc;"></div>
<div class="t" style="top:588.93px;font-size:11px;line-height:16px;color:#1a1a1a;letter-spacing:0.284px;font-weight:700;left:13.60px;">Manutenzioni</div>
<div class="t" style="top:588.93px;font-size:11.5px;line-height:16px;color:#ff1818;letter-spacing:0.500px;font-weight:700;right:694.30px;">-795,83</div>
<div class="t" style="top:588.93px;font-size:11.5px;line-height:16px;color:#ff1818;letter-spacing:0.500px;font-weight:700;right:604.30px;">-1.222,71</div>
<div class="r" style="left:9.00px;top:604.32px;width:414.00px;height:1.00px;background:#dcdcdc;"></div>
<div class="t" style="top:606.51px;font-size:11px;line-height:16px;color:#1a1a1a;letter-spacing:-0.170px;left:26.60px;">Verifiche centrale termica</div>
<div class="t" style="top:606.51px;font-size:11px;line-height:16px;color:#ff1818;letter-spacing:0.250px;right:694.55px;">-160,00</div>
<div class="t" style="top:606.51px;font-size:11px;line-height:16px;color:#ff1818;letter-spacing:0.250px;right:604.55px;">-155,17</div>
<div class="r" style="left:9.00px;top:621.91px;width:414.00px;height:1.00px;background:#dcdcdc;"></div>
<div class="t" style="top:624.10px;font-size:11px;line-height:16px;color:#1a1a1a;letter-spacing:-0.170px;left:26.60px;">Riparazioni centrale termica</div>
<div class="t" style="top:624.10px;font-size:11px;line-height:16px;color:#ff1818;letter-spacing:0.250px;right:694.55px;">-50,00</div>
<div class="t" style="top:624.10px;font-size:11px;line-height:16px;color:#ff1818;letter-spacing:0.250px;right:604.55px;">-479,62</div>
<div class="r" style="left:9.00px;top:639.49px;width:414.00px;height:1.00px;background:#dcdcdc;"></div>
<div class="t" style="top:641.69px;font-size:11px;line-height:16px;color:#1a1a1a;letter-spacing:-0.170px;left:26.60px;">Manutenzione estintori</div>
<div class="t" style="top:641.69px;font-size:11px;line-height:16px;color:#ff1818;letter-spacing:0.250px;right:694.55px;">-25,83</div>
<div class="t" style="top:641.69px;font-size:11px;line-height:16px;color:#ff1818;letter-spacing:0.250px;right:604.55px;">-20,48</div>
<div class="r" style="left:9.00px;top:657.08px;width:414.00px;height:1.00px;background:#dcdcdc;"></div>
<div class="r" style="left:242.00px;top:130.50px;width:1.00px;height:531.80px;background:#dcdcdc;"></div>
<div class="r" style="left:333.00px;top:130.50px;width:1.00px;height:531.80px;background:#dcdcdc;"></div>
<div class="r" style="left:242.00px;top:394.29px;width:1.00px;height:17.59px;background:#6ab4ff;"></div>
<div class="r" style="left:333.00px;top:394.29px;width:1.00px;height:17.59px;background:#6ab4ff;"></div>
<div class="r" style="left:423.00px;top:105.00px;width:18.50px;height:557.30px;background:#f0f0f0;"></div>
<div class="r" style="left:441.30px;top:105.00px;width:1.00px;height:557.30px;background:#e3e3e3;"></div>
<div class="r" style="left:425.00px;top:123.00px;width:15.00px;height:16.50px;background:#cdcdcd;"></div>
<svg style="left:427.50px;top:111.50px" width="9" height="6" viewBox="0 0 9 6"><path d="M0.7 5.2 L4.5 1.2 L8.3 5.2" stroke="#505050" stroke-width="1.5" fill="none"/></svg>
<svg style="left:427.50px;top:649.50px" width="9" height="6" viewBox="0 0 9 6"><path d="M0.7 0.8 L4.5 4.8 L8.3 0.8" stroke="#505050" stroke-width="1.5" fill="none"/></svg>
<div class="r" style="left:9.00px;top:662.00px;width:1008.00px;height:1.00px;background:#c9c9c9;"></div>
<div class="t" style="top:670.19px;font-size:11px;line-height:16px;color:#1a1a1a;letter-spacing:0.115px;left:37.50px;">Nuo<u>v</u>o</div>
<div class="t" style="top:670.19px;font-size:11px;line-height:16px;color:#1a1a1a;letter-spacing:-0.449px;left:112.50px;">E<u>l</u>imina</div>
<div class="t" style="top:670.19px;font-size:11px;line-height:16px;color:#1a1a1a;letter-spacing:-0.307px;left:186.25px;"><u>D</u>uplica</div>
<div class="t" style="top:670.19px;font-size:11px;line-height:16px;color:#1a1a1a;letter-spacing:-0.523px;left:260.25px;">Cerca</div>
<div class="t" style="top:670.19px;font-size:11px;line-height:16px;color:#1a1a1a;letter-spacing:-0.164px;left:317.00px;">C<u>o</u>pia da...</div>
<div class="t" style="top:670.19px;font-size:11px;line-height:16px;color:#1a1a1a;letter-spacing:-0.132px;left:400.00px;"><u>S</u>tampa</div>
<div class="r" style="left:449.00px;top:129.50px;width:561.40px;height:527.00px;background:#ffffff;border:1px solid #bdbdbd;"></div>
<div class="r" style="left:521.00px;top:112.00px;width:57.00px;height:18.00px;background:linear-gradient(#f0f0f0,#e6e6e6);border:1px solid #bdbdbd;border-bottom:none;"></div>
<div class="r" style="left:449.00px;top:110.30px;width:73.00px;height:20.70px;background:#ffffff;border:1px solid #bdbdbd;border-bottom:none;"></div>
<div class="t" style="top:112.09px;font-size:11px;line-height:16px;color:#1a1a1a;letter-spacing:-0.106px;left:454.80px;">Impostazioni</div>
<div class="t" style="top:112.99px;font-size:11px;line-height:16px;color:#1a1a1a;letter-spacing:-0.066px;left:525.40px;">Movimenti</div>
<div class="t" style="top:150.88px;font-size:11.6px;line-height:16px;color:#1a1a1a;letter-spacing:0.040px;left:464.75px;">Conto/sottoconto</div>
<div class="t" style="top:174.38px;font-size:11.6px;line-height:16px;color:#1a1a1a;letter-spacing:-0.311px;left:464.75px;">Fornitore predef.</div>
<div class="t" style="top:198.38px;font-size:11.6px;line-height:16px;color:#1a1a1a;letter-spacing:-0.527px;left:464.75px;">Risorsa predef.</div>
<div class="r" style="left:557.00px;top:147.00px;width:183.00px;height:20.00px;background:linear-gradient(#ededed,#e3e3e3);border:1px solid #bababa;"></div>
<div class="t" style="top:149.39px;font-size:11px;line-height:16px;color:#1a1a1a;letter-spacing:-0.151px;left:560.10px;">Consumi</div>
<svg style="left:727.00px;top:154.40px" width="9" height="6" viewBox="0 0 9 6"><path d="M0.8 0.9 L4.5 4.7 L8.2 0.9" stroke="#444" stroke-width="1.4" fill="none"/></svg>
<div class="r" style="left:557.00px;top:171.00px;width:183.00px;height:20.00px;background:linear-gradient(#ededed,#e3e3e3);border:1px solid #bababa;"></div>
<div class="t" style="top:173.39px;font-size:11px;line-height:16px;color:#1a1a1a;letter-spacing:-0.405px;left:560.10px;">Enel S.p.A.</div>
<svg style="left:727.00px;top:178.40px" width="9" height="6" viewBox="0 0 9 6"><path d="M0.8 0.9 L4.5 4.7 L8.2 0.9" stroke="#444" stroke-width="1.4" fill="none"/></svg>
<div class="r" style="left:557.00px;top:195.00px;width:183.00px;height:20.00px;background:linear-gradient(#ededed,#e3e3e3);border:1px solid #bababa;"></div>
<div class="t" style="top:197.39px;font-size:11px;line-height:16px;color:#1a1a1a;letter-spacing:-0.324px;left:560.10px;">Cassa di Risparmio di PD e RO</div>
<svg style="left:727.00px;top:202.40px" width="9" height="6" viewBox="0 0 9 6"><path d="M0.8 0.9 L4.5 4.7 L8.2 0.9" stroke="#444" stroke-width="1.4" fill="none"/></svg>
<div class="r" style="left:741.70px;top:147.00px;width:250.00px;height:20.30px;background:#ffffff;border:1px solid #c6c6c6;"></div>
<div class="t" style="top:148.90px;font-size:13px;line-height:16px;color:#111;letter-spacing:-0.219px;font-weight:700;left:744.10px;">Energia Elettrica</div>
<div class="r" style="left:742.30px;top:171.50px;width:20.40px;height:20.00px;background:linear-gradient(#efefef,#e0e0e0);border:1px solid #b8b8b8;"></div>
<div class="t" style="top:173.78px;font-size:11.6px;line-height:16px;color:#1a1a1a;letter-spacing:-0.276px;left:777.90px;">Preventivo</div>
<div class="t" style="top:197.48px;font-size:11.6px;line-height:16px;color:#1a1a1a;letter-spacing:-0.491px;left:777.90px;">Saldo attuale</div>
<div class="r" style="left:849.20px;top:171.00px;width:73.00px;height:20.20px;background:#ffffff;border:1px solid #c2c2c2;"></div>
<div class="t" style="top:172.60px;font-size:13px;line-height:16px;color:#ff1818;letter-spacing:0.547px;font-weight:700;left:852.10px;">464,81</div>
<div class="r" style="left:849.20px;top:195.00px;width:73.00px;height:20.00px;background:#e6e6e6;border:1px solid #c2c2c2;"></div>
<div class="t" style="top:196.40px;font-size:13px;line-height:16px;color:#ff1818;letter-spacing:0.547px;font-weight:700;left:852.10px;">492,21</div>
<div class="r" style="left:924.00px;top:171.00px;width:67.70px;height:20.20px;background:linear-gradient(#ededed,#e3e3e3);border:1px solid #bababa;"></div>
<div class="t" style="top:173.49px;font-size:11px;line-height:16px;color:#1a1a1a;letter-spacing:-0.751px;left:927.10px;">Spesa</div>
<svg style="left:978.70px;top:178.50px" width="9" height="6" viewBox="0 0 9 6"><path d="M0.8 0.9 L4.5 4.7 L8.2 0.9" stroke="#444" stroke-width="1.4" fill="none"/></svg>
<div class="r" style="left:924.00px;top:195.00px;width:67.70px;height:20.00px;background:linear-gradient(#ededed,#e3e3e3);border:1px solid #bababa;"></div>
<div class="t" style="top:197.39px;font-size:11px;line-height:16px;color:#1a1a1a;letter-spacing:-0.751px;left:927.10px;">Spesa</div>
<div class="t" style="top:234.08px;font-size:11.6px;line-height:16px;color:#1a1a1a;letter-spacing:-0.097px;left:465.50px;">Tabelle per le ripartizioni</div>
<div class="t" style="top:230.59px;font-size:11px;line-height:16px;color:#1a1a1a;letter-spacing:-0.212px;left:745.60px;">Ripartizioni differenziate</div>
<div class="r" style="left:870.00px;top:233.00px;width:13.20px;height:13.20px;background:#ffffff;border:1px solid #8a8a8a;"></div>
<div class="t" style="top:231.92px;font-size:11.5px;line-height:16px;color:#1a1a1a;letter-spacing:-0.702px;left:918.40px;">Eccezioni</div>
<div class="r" style="left:464.30px;top:252.00px;width:426.70px;height:222.00px;background:#ffffff;border:1px solid #c6c6c6;"></div>
<div class="r" style="left:465.30px;top:253.00px;width:406.20px;height:17.00px;background:#efefef;"></div>
<div class="r" style="left:871.50px;top:253.00px;width:17.00px;height:220.00px;background:#c5c5c5;"></div>
<div class="r" style="left:465.30px;top:270.00px;width:406.20px;height:17.50px;background:#3399ff;"></div>
<div class="r" style="left:465.30px;top:287.50px;width:406.20px;height:17.50px;background:#efefef;"></div>
<div class="r" style="left:531.00px;top:287.50px;width:178.00px;height:17.50px;background:#fffff0;"></div>
<div class="r" style="left:465.30px;top:305.00px;width:406.20px;height:1.00px;background:#dcdcdc;"></div>
<div class="r" style="left:530.00px;top:253.00px;width:1.00px;height:17.00px;background:#cfcfcf;"></div>
<div class="r" style="left:530.00px;top:270.00px;width:1.00px;height:17.50px;background:#66b2ff;"></div>
<div class="r" style="left:530.00px;top:287.50px;width:1.00px;height:17.50px;background:#d4d4d4;"></div>
<div class="r" style="left:708.00px;top:253.00px;width:1.00px;height:17.00px;background:#cfcfcf;"></div>
<div class="r" style="left:708.00px;top:270.00px;width:1.00px;height:17.50px;background:#66b2ff;"></div>
<div class="r" style="left:708.00px;top:287.50px;width:1.00px;height:17.50px;background:#d4d4d4;"></div>
<div class="r" style="left:749.00px;top:253.00px;width:1.00px;height:17.00px;background:#cfcfcf;"></div>
<div class="r" style="left:749.00px;top:270.00px;width:1.00px;height:17.50px;background:#66b2ff;"></div>
<div class="r" style="left:749.00px;top:287.50px;width:1.00px;height:17.50px;background:#d4d4d4;"></div>
<div class="r" style="left:790.00px;top:253.00px;width:1.00px;height:17.00px;background:#cfcfcf;"></div>
<div class="r" style="left:790.00px;top:270.00px;width:1.00px;height:17.50px;background:#66b2ff;"></div>
<div class="r" style="left:790.00px;top:287.50px;width:1.00px;height:17.50px;background:#d4d4d4;"></div>
<div class="r" style="left:831.00px;top:253.00px;width:1.00px;height:17.00px;background:#cfcfcf;"></div>
<div class="r" style="left:831.00px;top:270.00px;width:1.00px;height:17.50px;background:#66b2ff;"></div>
<div class="r" style="left:831.00px;top:287.50px;width:1.00px;height:17.50px;background:#d4d4d4;"></div>
<div class="r" style="left:465.30px;top:269.60px;width:406.20px;height:0.80px;background:#d6d6d6;"></div>
<div class="t" style="top:253.69px;font-size:11px;line-height:16px;color:#1a1a1a;letter-spacing:-0.458px;right:498.46px;">Perc</div>
<div class="t" style="top:253.69px;font-size:11px;line-height:16px;color:#1a1a1a;letter-spacing:-0.602px;left:535.50px;">Tabella</div>
<div class="t" style="top:253.69px;font-size:11px;line-height:16px;color:#1a1a1a;letter-spacing:0.000px;right:279.00px;">Pr</div>
<div class="t" style="top:253.69px;font-size:11px;line-height:16px;color:#1a1a1a;letter-spacing:0.000px;right:237.70px;">Co</div>
<div class="t" style="top:253.69px;font-size:11px;line-height:16px;color:#1a1a1a;letter-spacing:0.000px;right:196.70px;">Us</div>
<div class="t" style="top:253.69px;font-size:11px;line-height:16px;color:#1a1a1a;letter-spacing:0.000px;right:156.00px;">As</div>
<div class="t" style="top:271.19px;font-size:11px;line-height:16px;color:#fff;letter-spacing:0.609px;right:497.69px;">60%</div>
<div class="t" style="top:271.19px;font-size:11px;line-height:16px;color:#fff;letter-spacing:-0.393px;left:535.50px;">Scala A palazz. 1</div>
<div class="t" style="top:271.19px;font-size:11px;line-height:16px;color:#fff;letter-spacing:0.453px;right:237.75px;">100%</div>
<div class="t" style="top:288.69px;font-size:11px;line-height:16px;color:#1a1a1a;letter-spacing:0.609px;right:497.69px;">40%</div>
<div class="t" style="top:288.69px;font-size:11px;line-height:16px;color:#1a1a1a;letter-spacing:-0.393px;left:535.50px;">Scala A palazz. 2</div>
<div class="t" style="top:288.69px;font-size:11px;line-height:16px;color:#1a1a1a;letter-spacing:0.453px;right:237.75px;">100%</div>
<div class="r" style="left:895.30px;top:252.00px;width:96.20px;height:222.00px;background:#ffffff;border:1px solid #c6c6c6;"></div>
<div class="r" style="left:896.30px;top:253.00px;width:78.00px;height:17.00px;background:#efefef;"></div>
<div class="r" style="left:974.00px;top:253.00px;width:16.60px;height:220.00px;background:#c5c5c5;"></div>
<div class="r" style="left:896.30px;top:270.00px;width:78.00px;height:18.00px;background:#ffffff;border:1px solid #d6d6d6;border-left:none;"></div>
<div class="t" style="top:253.69px;font-size:11px;line-height:16px;color:#1a1a1a;letter-spacing:0.000px;left:901.00px;">Unità</div>
<div class="t" style="top:481.72px;font-size:11.5px;line-height:16px;color:#1a1a1a;letter-spacing:-0.395px;left:478.00px;">Aggiungi</div>
<div class="t" style="top:481.72px;font-size:11.5px;line-height:16px;color:#1a1a1a;letter-spacing:-0.352px;left:552.00px;">Togli</div>
<div class="t" style="top:481.72px;font-size:11.5px;line-height:16px;color:#1a1a1a;letter-spacing:-0.690px;left:620.00px;">Modifica</div>
<div class="t" style="top:481.72px;font-size:11.5px;line-height:16px;color:#1a1a1a;letter-spacing:-0.472px;left:695.60px;">Propaga</div>
<div class="t" style="top:524.63px;font-size:11.6px;line-height:16px;color:#1a1a1a;letter-spacing:-0.420px;left:464.75px;">Ripartizione predef. su</div>
<div class="t" style="top:548.38px;font-size:11.6px;line-height:16px;color:#1a1a1a;letter-spacing:-0.412px;left:464.75px;">Ripartizione nei subentri</div>
<div class="t" style="top:572.38px;font-size:11.6px;line-height:16px;color:#1a1a1a;letter-spacing:-0.246px;left:464.75px;">Preventivo gest. succ.</div>
<div class="t" style="top:596.38px;font-size:11.6px;line-height:16px;color:#1a1a1a;letter-spacing:-0.391px;left:464.75px;">Tipo utenza</div>
<div class="t" style="top:621.38px;font-size:11.6px;line-height:16px;color:#1a1a1a;letter-spacing:-0.553px;left:464.75px;">Detrazione fiscale</div>
<div class="r" style="left:591.00px;top:520.50px;width:403.00px;height:20.00px;background:linear-gradient(#ededed,#e3e3e3);border:1px solid #bababa;"></div>
<div class="t" style="top:523.19px;font-size:11px;line-height:16px;color:#1a1a1a;letter-spacing:0.078px;left:594.10px;">- Tutto il condomìnio -</div>
<svg style="left:981.00px;top:527.90px" width="9" height="6" viewBox="0 0 9 6"><path d="M0.8 0.9 L4.5 4.7 L8.2 0.9" stroke="#444" stroke-width="1.4" fill="none"/></svg>
<div class="r" style="left:591.00px;top:544.50px;width:403.00px;height:20.00px;background:linear-gradient(#ededed,#e3e3e3);border:1px solid #bababa;"></div>
<div class="t" style="top:547.19px;font-size:11px;line-height:16px;color:#1a1a1a;letter-spacing:-0.155px;left:594.10px;">Proporzionale ai giorni di permanenza</div>
<svg style="left:981.00px;top:551.90px" width="9" height="6" viewBox="0 0 9 6"><path d="M0.8 0.9 L4.5 4.7 L8.2 0.9" stroke="#444" stroke-width="1.4" fill="none"/></svg>
<div class="r" style="left:591.00px;top:568.00px;width:328.00px;height:22.50px;background:#ececec;border:1px solid #c6c6c6;"></div>
<div class="t" style="top:570.69px;font-size:11px;line-height:16px;color:#1a1a1a;letter-spacing:-0.039px;left:594.25px;">100% della movimentaz. ordinaria</div>
<div class="t" style="top:572.62px;font-size:11.5px;line-height:16px;color:#1a1a1a;letter-spacing:-0.633px;left:945.60px;">Modifica</div>
<div class="r" style="left:591.00px;top:592.50px;width:182.00px;height:20.00px;background:linear-gradient(#ededed,#e3e3e3);border:1px solid #bababa;"></div>
<div class="t" style="top:594.94px;font-size:11px;line-height:16px;color:#1a1a1a;letter-spacing:-0.188px;left:594.10px;">-Nessuno-</div>
<svg style="left:760.00px;top:599.90px" width="9" height="6" viewBox="0 0 9 6"><path d="M0.8 0.9 L4.5 4.7 L8.2 0.9" stroke="#444" stroke-width="1.4" fill="none"/></svg>
<div class="r" style="left:591.00px;top:617.00px;width:210.00px;height:20.00px;background:linear-gradient(#ededed,#e3e3e3);border:1px solid #bababa;"></div>
<div class="t" style="top:620.19px;font-size:11px;line-height:16px;color:#1a1a1a;letter-spacing:-0.312px;left:594.10px;">-Nessuna-</div>
<svg style="left:788.00px;top:624.40px" width="9" height="6" viewBox="0 0 9 6"><path d="M0.8 0.9 L4.5 4.7 L8.2 0.9" stroke="#444" stroke-width="1.4" fill="none"/></svg>
<svg style="left:0;top:0;pointer-events:none" width="1024" height="698" viewBox="0 0 1024 698"><rect x="24.30" y="674.20" width="7.20" height="5.60" rx="0.6" fill="#9fd0f5" stroke="#2f78c0" stroke-width="0.9" /><rect x="25.50" y="675.60" width="4.60" height="2.60" rx="0" fill="#d9eefc" stroke="none" stroke-width="1" /><ellipse cx="31.50" cy="674.60" rx="2.10" ry="2.10" fill="#f6c93a" stroke="#d9a21c" stroke-width="0.4" />
<polygon points="98,673.2 107.8,673.2 106.4,683.8 99.4,683.8" fill="#e9eef0" stroke="#8f9aa0" stroke-width="0.8"/>
<ellipse cx="102.90" cy="673.20" rx="4.90" ry="1.30" fill="#f8fafb" stroke="#8f9aa0" stroke-width="0.7" />
<ellipse cx="102.90" cy="678.60" rx="2.30" ry="2.60" fill="#49b04a" stroke="none" stroke-width="1" />
<ellipse cx="102.90" cy="678.60" rx="0.90" ry="1.10" fill="#e9eef0" stroke="none" stroke-width="1" />
<rect x="173.60" y="672.80" width="7.40" height="6.00" rx="0.5" fill="#a8d2f4" stroke="#2f6fb4" stroke-width="0.9" /><rect x="173.60" y="672.80" width="7.40" height="1.80" rx="0" fill="#3f86d0" stroke="none" stroke-width="1" />
<rect x="171.20" y="676.00" width="7.60" height="6.60" rx="0.5" fill="#b9dcf7" stroke="#2f6fb4" stroke-width="0.9" /><rect x="171.20" y="676.00" width="7.60" height="1.90" rx="0" fill="#3f86d0" stroke="none" stroke-width="1" />
<path d="M244.4 679 L241.4 683" stroke="#a8842c" stroke-width="2.2" stroke-linecap="round"/>
<ellipse cx="247.60" cy="675.80" rx="4.20" ry="4.20" fill="#eaf3fa" stroke="#7d8a94" stroke-width="1.3" />
<rect x="301.20" y="673.40" width="11.60" height="8.40" rx="0" fill="#b9bdc0" stroke="#7c8286" stroke-width="0.6" />
<ellipse cx="307.00" cy="681.80" rx="5.80" ry="1.90" fill="#a9adb0" stroke="#7c8286" stroke-width="0.6" />
<ellipse cx="307.00" cy="673.40" rx="5.80" ry="1.90" fill="#e3e6e8" stroke="#7c8286" stroke-width="0.6" />
<path d="M302.5 678.2 l4.2 -3.6 v2.2 h3.6 v3 h-3.6 v2.2 z" fill="#3fb03f" stroke="#1f7a1f" stroke-width="0.5"/>
<polygon points="388.2,672.8 395.8,672.8 394.6,677.2 387,677.2" fill="#fbfbfb" stroke="#8c949c" stroke-width="0.6"/>
<polygon points="384.8,677 396.8,675.6 396.8,680.6 384.8,682.2" fill="#c9d3dc" stroke="#7c8792" stroke-width="0.6"/>
<polygon points="386.4,681 394.6,680 393.6,683.6 385.4,684" fill="#f4f6f8" stroke="#8c949c" stroke-width="0.5"/>
<rect x="393.60" y="677.20" width="2.20" height="1.20" rx="0" fill="#4a90d8" stroke="none" stroke-width="1" />
<rect x="467.20" y="485.60" width="8.60" height="6.00" rx="0.5" fill="#8ec4f0" stroke="#2f6fb4" stroke-width="0.9" /><rect x="468.50" y="487.00" width="6.00" height="2.60" rx="0" fill="#e4f2fd" stroke="none" stroke-width="1" />
<path d="M475.20 489.00 v6 M472.20 492.00 h6" stroke="#157a15" stroke-width="2.6" fill="none"/><path d="M475.20 489.40 v5.2 M472.60 492.00 h5.2" stroke="#2aa02a" stroke-width="1.5" fill="none"/>
<rect x="541.40" y="485.60" width="8.60" height="6.00" rx="0.5" fill="#8ec4f0" stroke="#2f6fb4" stroke-width="0.9" /><rect x="542.70" y="487.00" width="6.00" height="2.60" rx="0" fill="#e4f2fd" stroke="none" stroke-width="1" />
<path d="M546.20 489.20 l5.6 5.6 M551.80 489.20 l-5.6 5.6" stroke="#e02828" stroke-width="1.7" fill="none"/>
<polygon points="604.50,494.00 605.80,490.48 613.86,483.66 617.50,486.74 609.18,493.12" fill="#ecc84a" stroke="#a88720" stroke-width="0.5" stroke-linejoin="round"/><polygon points="613.86,483.66 615.16,483.00 617.50,485.20 617.50,486.74" fill="#d8483c"/><polygon points="604.50,494.00 605.28,491.80 606.84,493.45" fill="#444"/>
<rect x="681.00" y="485.20" width="9.40" height="7.80" rx="2" fill="#a9d3f3" stroke="#3a7ab8" stroke-width="1" />
<rect x="683.20" y="487.20" width="5.00" height="3.80" rx="0" fill="#e3f1fb" stroke="none" stroke-width="1" />
<path d="M685.7 482.2 l2.6 2.6 h-5.2 z M685.7 496 l2.6 -2.6 h-5.2 z" fill="#3a7ab8"/>
<rect x="906.60" y="485.60" width="8.60" height="6.00" rx="0.5" fill="#8ec4f0" stroke="#2f6fb4" stroke-width="0.9" /><rect x="907.90" y="487.00" width="6.00" height="2.60" rx="0" fill="#e4f2fd" stroke="none" stroke-width="1" />
<path d="M914.60 489.20 v6 M911.60 492.20 h6" stroke="#157a15" stroke-width="2.6" fill="none"/><path d="M914.60 489.60 v5.2 M912.00 492.20 h5.2" stroke="#2aa02a" stroke-width="1.5" fill="none"/>
<rect x="934.80" y="485.60" width="8.60" height="6.00" rx="0.5" fill="#bdbdbd" stroke="#6a6a6a" stroke-width="0.9" /><rect x="936.10" y="487.00" width="6.00" height="2.60" rx="0" fill="#e8e8e8" stroke="none" stroke-width="1" />
<path d="M940.20 489.40 l5.6 5.6 M945.80 489.40 l-5.6 5.6" stroke="#555" stroke-width="1.7" fill="none"/>
<polygon points="962.20,494.00 963.50,490.48 971.56,483.66 975.20,486.74 966.88,493.12" fill="#b5b5b5" stroke="#777" stroke-width="0.5" stroke-linejoin="round"/><polygon points="971.56,483.66 972.86,483.00 975.20,485.20 975.20,486.74" fill="#999"/><polygon points="962.20,494.00 962.98,491.80 964.54,493.45" fill="#555"/>
<polygon points="929.80,585.40 931.10,581.88 939.16,575.06 942.80,578.14 934.48,584.52" fill="#ecc84a" stroke="#a88720" stroke-width="0.5" stroke-linejoin="round"/><polygon points="939.16,575.06 940.46,574.40 942.80,576.60 942.80,578.14" fill="#d8483c"/><polygon points="929.80,585.40 930.58,583.20 932.14,584.85" fill="#444"/>
<rect x="748.20" y="178.08" width="7.56" height="5.88" rx="0.6" fill="#9fd0f5" stroke="#2f78c0" stroke-width="0.9" /><rect x="749.46" y="179.55" width="4.83" height="2.73" rx="0" fill="#d9eefc" stroke="none" stroke-width="1" /><ellipse cx="755.76" cy="178.50" rx="2.21" ry="2.21" fill="#f6c93a" stroke="#d9a21c" stroke-width="0.4" /></svg>
</body></html>
